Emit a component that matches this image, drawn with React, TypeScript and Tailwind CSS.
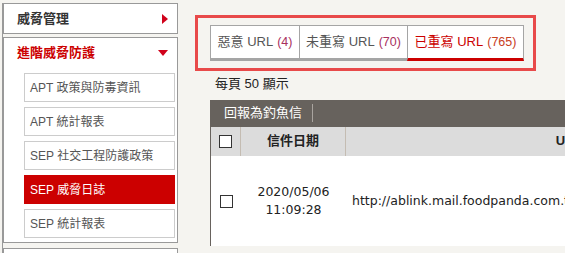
import React from "react";

const cjk = { fontFamily: '"Liberation Sans", "Noto Sans CJK TC", sans-serif' };
const latin = { fontFamily: '"DejaVu Sans", "Noto Sans CJK TC", sans-serif' };

const subItems = [
  "APT 政策與防毒資訊",
  "APT 統計報表",
  "SEP 社交工程防護政策",
  "SEP 威脅日誌",
  "SEP 統計報表",
];

const tabs = [
  { label: "惡意 URL", count: "(4)", width: "w-[90px]", active: false },
  { label: "未重寫 URL", count: "(70)", width: "w-[109px]", active: false },
  { label: "已重寫 URL", count: "(765)", width: "w-[117px]", active: true },
];

function Sidebar() {
  return (
    <div className="ml-[2px] mt-[3px] w-[176px] shrink-0 border-l border-[#999]">
      <div className="flex h-[31px] items-center justify-between border border-[#999] bg-white pl-[13px] pr-[9px]">
        <span className="text-[13px] font-bold text-[#333]">威脅管理</span>
        <span className="h-0 w-0 border-y-[5px] border-l-[6px] border-y-transparent border-l-[#d0021b]" />
      </div>

      <div className="mt-[3px] border border-[#999] bg-white pb-[4px]">
        <div className="mb-[6px] flex h-[29px] items-center justify-between pl-[13px] pr-[9px]">
          <span className="text-[13px] font-bold text-[#cc0000]">進階威脅防護</span>
          <span className="h-0 w-0 border-x-[5px] border-t-[6px] border-x-transparent border-t-[#d0021b]" />
        </div>
        <div className="flex flex-col gap-[5px] pl-[20px] pr-[2px]">
          {subItems.map((item, i) =>
            i === 3 ? (
              <div key={item} className="flex h-[29px] items-center bg-[#cc0000] pl-[6px] text-[12px] text-white">
                {item}
              </div>
            ) : (
              <div key={item} className="flex h-[29px] items-center border border-[#ccc] bg-white pl-[5px] text-[12px] text-[#555]">
                {item}
              </div>
            )
          )}
        </div>
      </div>

      <div className="mt-[5px] h-[20px] border border-[#999] bg-white" />
    </div>
  );
}

export default function App() {
  return (
    <div className="flex h-[253px] w-[565px] overflow-hidden bg-[#f5f4f0]" style={cjk}>
      <Sidebar />

      {/* main column */}
      <div className="ml-[17px] mt-[15px] flex min-w-0 flex-col">
        <div className="h-[56px] w-[341px] border-[3px] border-[#e84a4a] pl-[12px] pt-[7px]">
          <div className="flex">
            {tabs.map((t) => (
              <div
                key={t.label}
                className={`${t.width} flex h-[36px] items-center justify-center border-x border-t border-[#a5a5a5] bg-white ${t.active ? "border-b-[3px] border-b-[#cc0000]" : "border-b-[3px] border-b-[#a5a5a5]"} -ml-px first:ml-0`}
              >
                <span className={`text-[13px] ${t.active ? "text-[#cc0000]" : "text-[#555]"}`}>{t.label}</span>
                <span className={`ml-[4px] text-[12.5px] ${t.active ? "text-[#c8401e]" : "text-[#a8305e]"}`}>{t.count}</span>
              </div>
            ))}
          </div>
        </div>

        <div className="ml-[20px] mt-[3px] text-[13px] text-[#222]">每頁 50 顯示</div>

        <div className="ml-[15px] mt-[6px] w-[600px] shrink-0 border-l border-[#67625d] bg-white">
          <div className="flex h-[27px] items-center bg-[#67625d]">
            <span className="pl-[13px] pr-[10px] text-[13px] text-white">回報為釣魚信</span>
            <span className="h-[18px] w-px bg-[#a9a49f]" />
          </div>
          <div className="flex h-[29px] items-center bg-[#dcdcdc] text-[13px] font-bold text-[#222]">
            <div className="flex h-full w-[30px] items-center justify-center border-r border-[#c4bcb2]">
              <span className="h-[13px] w-[13px] border border-[#333] bg-white" />
            </div>
            <div className="flex h-full w-[105px] items-center justify-center border-r border-[#c4bcb2]">信件日期</div>
            <div className="flex h-full w-[446px] items-center justify-center">URL</div>
          </div>
          <div className="flex h-[90px] items-start pt-[27px] text-[12.5px] text-[#222]" style={latin}>
            <div className="flex w-[30px] justify-center pt-[12px]">
              <span className="h-[13px] w-[13px] border border-[#333] bg-white" />
            </div>
            <div className="w-[105px] text-center leading-[18px]">
              <div>2020/05/06</div>
              <div>11:09:28</div>
            </div>
            <div className="whitespace-nowrap pl-[6px] pt-[9px]">http://ablink.mail.foodpanda.com.tw/</div>
          </div>
        </div>
      </div>
    </div>
  );
}
